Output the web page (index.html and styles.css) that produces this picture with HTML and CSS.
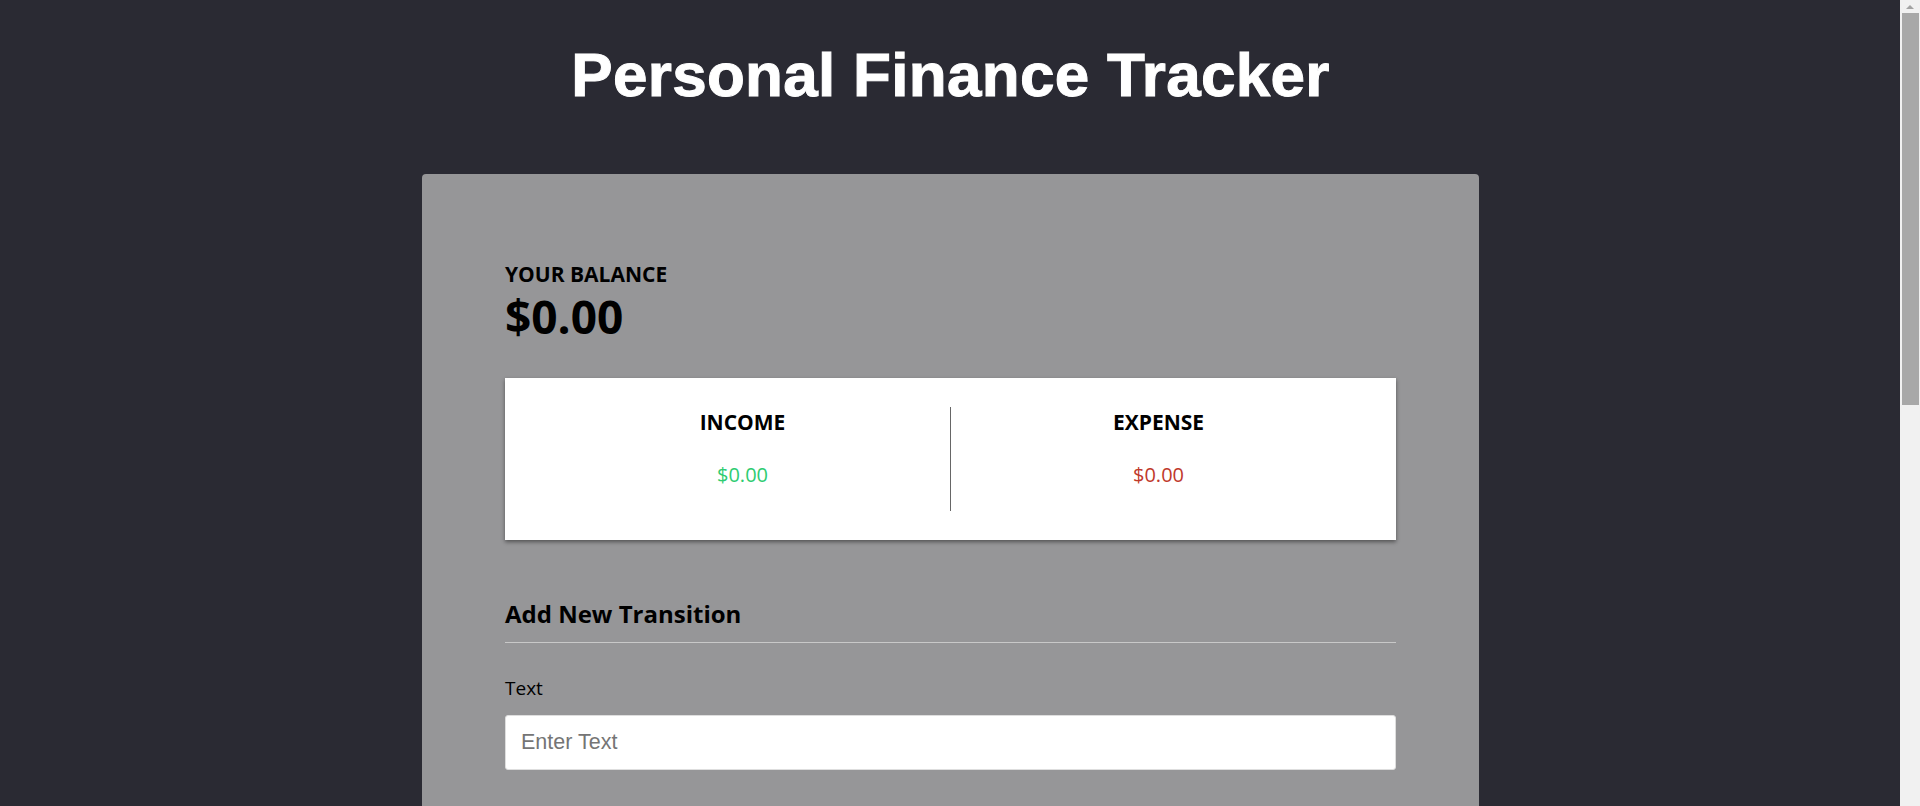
FILE: index.html
```html
<!DOCTYPE html>
<html lang="en">
<head>
<meta charset="utf-8">
<title>Personal Finance Tracker</title>
<link rel="stylesheet" href="styles.css">
</head>
<body>
  <div class="page">
    <h1 class="title">Personal Finance Tracker</h1>
    <main class="card">
      <h4 class="balance-label">YOUR BALANCE</h4>
      <h1 class="balance-amount">$0.00</h1>

      <div class="summary">
        <div class="summary-col summary-col--income">
          <h4 class="summary-title">INCOME</h4>
          <p class="summary-value summary-value--plus">$0.00</p>
        </div>
        <div class="summary-col">
          <h4 class="summary-title">EXPENSE</h4>
          <p class="summary-value summary-value--minus">$0.00</p>
        </div>
      </div>

      <h3 class="section-title">Add New Transition</h3>
      <form class="form">
        <div class="field">
          <label class="field-label" for="text">Text</label>
          <input class="field-input" type="text" id="text" placeholder="Enter Text">
        </div>
      </form>
    </main>
  </div>
  <div class="scrollbar" aria-hidden="true">
    <div class="scrollbar-arrow"></div>
    <div class="scrollbar-thumb"></div>
  </div>
</body>
</html>
```
FILE: styles.css
```css
html, body {
  margin: 0;
  padding: 0;
}
body {
  background: #2a2a33;
  font-family: "Open Sans", "Noto Sans", sans-serif;
  color: #000;
}
.page {
  margin-right: 19px;
  padding-top: 1px;
}
.title {
  margin: 38px 0 64px;
  text-align: center;
  color: #fff;
  font-family: "Liberation Sans", Arial, sans-serif;
  font-weight: 700;
  font-size: 62px;
  line-height: normal;
  letter-spacing: 0.3px;
  -webkit-text-stroke: 1px #fff;
}
.card {
  width: 1057px;
  box-sizing: border-box;
  margin: 0 auto 120px;
  padding: 88px 83px 700px;
  background: #969698;
  border-radius: 4px;
}
.balance-label {
  margin: 0;
  font-size: 21px;
  line-height: 25px;
  font-weight: 700;
}
.balance-amount {
  margin: 4px 0 0;
  font-size: 46px;
  line-height: 50px;
  font-weight: 700;
}
.summary {
  display: flex;
  margin-top: 37px;
  padding: 29px 30px;
  background: #fff;
  box-shadow: 0 2px 4px rgba(0, 0, 0, 0.45);
}
.summary-col {
  flex: 1;
  height: 104px;
  box-sizing: border-box;
  padding-top: 3px;
  text-align: center;
}
.summary-col--income {
  border-right: 1px solid #666;
}
.summary-title {
  margin: 0;
  font-size: 21px;
  line-height: 25px;
  font-weight: 700;
}
.summary-value {
  margin: 27px 0 0;
  font-size: 20px;
  line-height: 25px;
  font-weight: 400;
}
.summary-value--plus {
  color: #2ecc71;
}
.summary-value--minus {
  color: #c0392b;
}
.section-title {
  margin: 61px 0 0;
  padding-bottom: 15px;
  border-bottom: 1px solid #c8c8c8;
  font-size: 24px;
  line-height: 26px;
  font-weight: 700;
}
.form {
  display: flex;
  flex-direction: column;
}
.field {
  display: flex;
  flex-direction: column;
  margin-top: 34px;
}
.field-label {
  font-size: 19px;
  line-height: 22px;
}
.field-input {
  margin-top: 16px;
  height: 55px;
  box-sizing: border-box;
  padding: 0 15px;
  border: 1px solid #dedede;
  border-radius: 3px;
  background: #fff;
  font-family: "Liberation Sans", Arial, sans-serif;
  font-size: 21.5px;
  color: #333;
}
.field-input::placeholder {
  color: #757575;
}
.scrollbar {
  position: fixed;
  top: 0;
  right: 0;
  bottom: 0;
  width: 20px;
  background: #f1f1f1;
}
.scrollbar-arrow {
  position: absolute;
  top: 5px;
  left: 6px;
  width: 0;
  height: 0;
  border-left: 4px solid transparent;
  border-right: 4px solid transparent;
  border-bottom: 4px solid #a3a3a3;
}
.scrollbar-thumb {
  position: absolute;
  top: 13px;
  left: 2px;
  width: 17px;
  height: 392px;
  background: #a8a8a8;
}
```
